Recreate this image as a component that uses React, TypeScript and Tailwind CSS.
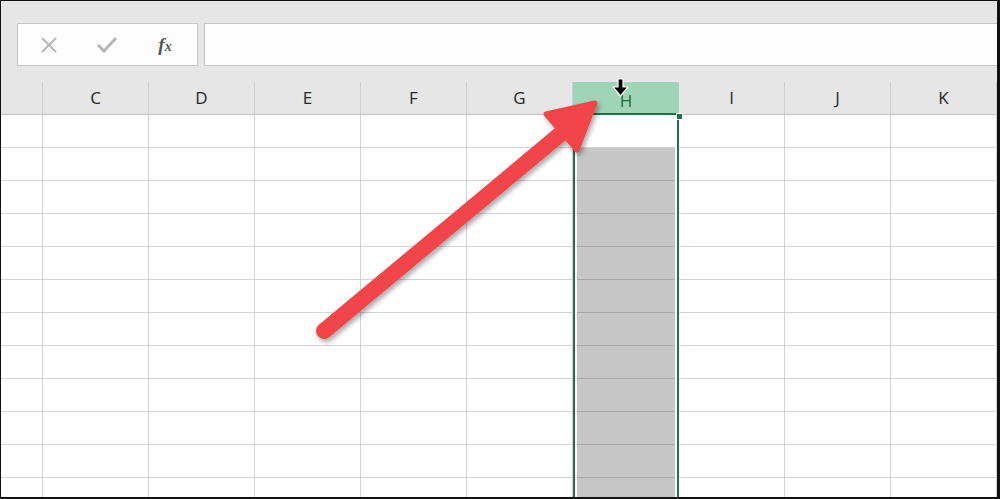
import React from "react";

const cols = ["C", "D", "E", "F", "G", "H", "I", "J", "K"];
const rows = Array.from({ length: 12 }, (_, i) => i);

function HeaderCell({ label }: { label: string }) {
  const sel = label === "H";
  return (
    <div
      className={
        sel
          ? "w-[106px] shrink-0 h-full flex items-center justify-center bg-[#9fd5b7] text-[#1e6b46] border-b-2 border-[#217346]"
          : "w-[106px] shrink-0 h-full flex items-end justify-center border-r border-[#cfcfcf] border-b border-b-[#c4c4c4] text-[#262626]"
      }
    >
      <span className={sel ? "text-[17px] leading-none pt-[6px]" : "text-[17px] leading-none pb-[8px]"}>{label}</span>
    </div>
  );
}

function BodyCell({ col, row }: { col: string; row: number }) {
  if (col === "H") {
    return (
      <div className="w-[106px] shrink-0 h-full border-x-2 border-[#217346] bg-white px-[2px]">
        <div
          className={
            row === 0
              ? "h-full border-b border-[#d4d4d4] bg-white"
              : "h-full bg-[#c6c6c6] border-b border-[#a6a6a6]"
          }
        />
      </div>
    );
  }
  return <div className="w-[106px] shrink-0 h-full border-r border-b border-[#d4d4d4] bg-white" />;
}

export default function App() {
  return (
    <div
      className="relative w-[1000px] h-[499px] overflow-hidden bg-white border-t border-l border-r-[3px] border-b-2 border-[#111]"
      style={{ fontFamily: '"Open Sans", "Liberation Sans", sans-serif' }}
    >
      {/* toolbar */}
      <div className="h-[81px] bg-[#e6e6e6] flex pt-[22px] pl-[16px] gap-[6px]">
        <div className="w-[181px] h-[43px] bg-[#fdfdfd] border border-[#c6c6c6] flex items-center">
          <div className="w-[62px] flex justify-center">
            <svg width="18" height="18" viewBox="0 0 18 18">
              <path d="M2 2 L16 16 M16 2 L2 16" stroke="#b8b8b8" strokeWidth="2" fill="none" />
            </svg>
          </div>
          <div className="w-[54px] flex justify-center">
            <svg width="22" height="18" viewBox="0 0 22 18">
              <path d="M2 9 L8 15 L20 2" stroke="#b8b8b8" strokeWidth="3" fill="none" />
            </svg>
          </div>
          <span
            className="w-[62px] text-center text-[19px] leading-none text-[#555] italic font-bold"
            style={{ fontFamily: '"Liberation Serif", serif' }}
          >
            f<span className="text-[14px]">x</span>
          </span>
        </div>
        <div className="flex-1 h-[43px] bg-[#fdfdfd] border-y border-l border-[#c6c6c6]" />
      </div>

      {/* column headers */}
      <div className="h-[33px] bg-[#e6e6e6] flex">
        <div className="w-[42px] shrink-0 h-full border-r border-[#cfcfcf] border-b border-b-[#c4c4c4]" />
        {cols.map((c) => (
          <HeaderCell key={c} label={c} />
        ))}
      </div>

      {/* grid */}
      {rows.map((r) => (
        <div key={r} className="h-[33px] flex">
          <div className="w-[42px] shrink-0 h-full border-r border-b border-[#d4d4d4]" />
          {cols.map((c) => (
            <BodyCell key={c} col={c} row={r} />
          ))}
        </div>
      ))}

      {/* fill handle */}
      <div className="absolute left-[675px] top-[112px] w-[7px] h-[7px] bg-[#217346] border border-white" />

      {/* arrow + cursor */}
      <svg className="absolute left-0 top-0 pointer-events-none" width="1000" height="499">
        <defs>
          <filter id="sh" x="-20%" y="-20%" width="140%" height="140%">
            <feDropShadow dx="2" dy="3" stdDeviation="2.5" floodColor="#000" floodOpacity="0.35" />
          </filter>
        </defs>
        <g filter="url(#sh)" fill="#f1444a" stroke="#f1444a">
          <line x1="323" y1="330" x2="562" y2="131" strokeWidth="16" strokeLinecap="round" />
          <polygon points="594,102 545,113 576,149" strokeWidth="5" strokeLinejoin="round" />
        </g>
        <path
          d="M617 78 h5 v8 h5 l-7.5 9 l-7.5 -9 h5 z"
          fill="#000"
          stroke="#fff"
          strokeWidth="1.2"
          strokeLinejoin="round"
        />
      </svg>
    </div>
  );
}
